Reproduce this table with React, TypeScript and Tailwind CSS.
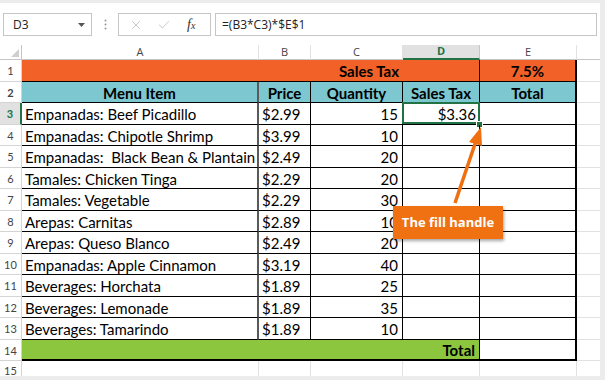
import { X, Check } from "lucide-react";

type Item = [string, string, string];

const items: Item[] = [
  ["Empanadas: Beef Picadillo", "$2.99", "15"],
  ["Empanadas: Chipotle Shrimp", "$3.99", "10"],
  ["Empanadas:  Black Bean & Plantain", "$2.49", "20"],
  ["Tamales: Chicken Tinga", "$2.29", "20"],
  ["Tamales: Vegetable", "$2.29", "30"],
  ["Arepas: Carnitas", "$2.89", "10"],
  ["Arepas: Queso Blanco", "$2.49", "20"],
  ["Empanadas: Apple Cinnamon", "$3.19", "40"],
  ["Beverages: Horchata", "$1.89", "25"],
  ["Beverages: Lemonade", "$1.89", "35"],
  ["Beverages: Tamarindo", "$1.89", "10"],
];

const rowH = (n: number) => (n % 2 === 1 ? "h-[22px]" : "h-[21px]");

function RowNum({ n, active }: { n: number; active?: boolean }) {
  return (
    <div
      className={
        active
          ? "w-[22px] shrink-0 flex items-center justify-center pt-[2px] bg-[#e1e1e1] border-r-2 border-r-[#217346] border-b border-b-[#d4d4d4] text-[11px] text-[#217346] font-bold"
          : "w-[22px] shrink-0 flex items-center justify-center pt-[2px] border-r border-b border-[#d4d4d4] text-[11px] text-[#444]"
      }
    >
      {n}
    </div>
  );
}

function Tail() {
  return <div className="flex-1 border-b border-[#e1e1e1]" />;
}

function ColHead({ label, w, active }: { label: string; w: string; active?: boolean }) {
  return (
    <div
      className={
        active
          ? `${w} shrink-0 flex items-center justify-center bg-[#e1e1e1] border-r border-[#c6c6c6] border-b-2 border-b-[#217346] text-[11px] text-[#217346] font-bold`
          : `${w} shrink-0 flex items-center justify-center border-r border-[#e1e1e1] border-b border-b-[#c6c6c6] text-[11px] text-[#444]`
      }
    >
      {label}
    </div>
  );
}

export default function App() {
  return (
    <div className="relative w-[605px] h-[380px] overflow-hidden bg-white border-t-[3px] border-r-[5px] border-b-[4px] border-[#ececec] flex flex-col font-[Lato,sans-serif] text-black">
      {/* Formula bar */}
      <div className="mt-[10px] h-[23px] flex items-stretch shrink-0 font-['Open_Sans',sans-serif]">
        <div className="ml-[3px] w-[89px] border border-[#c6c6c6] flex items-center justify-between pl-[9px] pr-[6px] text-[12px] text-[#222]">
          <span>D3</span>
          <svg width="7" height="4" viewBox="0 0 7 4">
            <polygon points="0,0 7,0 3.5,4" fill="#555" />
          </svg>
        </div>
        <div className="w-[26px] flex items-center justify-center">
          <svg width="3" height="11" viewBox="0 0 3 11">
            <circle cx="1.5" cy="1.5" r="1" fill="#999" />
            <circle cx="1.5" cy="5.5" r="1" fill="#999" />
            <circle cx="1.5" cy="9.5" r="1" fill="#999" />
          </svg>
        </div>
        <div className="w-[93px] border border-[#c6c6c6] flex items-center pl-[10px] gap-[14px]">
          <X size={14} strokeWidth={1.3} color="#b5b5b5" />
          <Check size={14} strokeWidth={1.3} color="#b5b5b5" />
          <span className="font-['Liberation_Serif',serif] italic text-[14px] text-[#333] leading-none ml-[2px]">
            f<span className="text-[10px]">x</span>
          </span>
        </div>
        <div className="ml-[4px] mr-[3px] flex-1 border border-[#c6c6c6] flex items-center pl-[6px] text-[12px] text-[#222]">
          =(B3*C3)*$E$1
        </div>
      </div>

      {/* Column headers */}
      <div className="mt-[9px] h-[15px] flex shrink-0 font-['Open_Sans',sans-serif]">
        <div className="w-[22px] shrink-0 border-r border-b border-[#c6c6c6] flex items-end justify-end pr-[2px] pb-[2px]">
          <svg width="8" height="8" viewBox="0 0 8 8">
            <polygon points="8,0 8,8 0,8" fill="#cfcfcf" />
          </svg>
        </div>
        <ColHead label="A" w="w-[237px]" />
        <ColHead label="B" w="w-[52px]" />
        <ColHead label="C" w="w-[92px]" />
        <ColHead label="D" w="w-[77px]" active />
        <ColHead label="E" w="w-[97px]" />
        <div className="flex-1 border-b border-[#c6c6c6]" />
      </div>

      {/* Row 1 */}
      <div className={`${rowH(1)} flex shrink-0 text-[15px]`}>
        <RowNum n={1} />
        <div className="w-[237px] shrink-0 bg-[#f26128] border-b border-black" />
        <div className="w-[221px] shrink-0 bg-[#f26128] border-r border-b border-black flex items-center justify-center pt-[2px] font-bold">
          Sales Tax
        </div>
        <div className="w-[97px] shrink-0 bg-[#f26128] border-r-2 border-b border-black flex items-center justify-center pt-[2px] font-bold">
          7.5%
        </div>
        <Tail />
      </div>

      {/* Row 2 */}
      <div className={`${rowH(2)} flex shrink-0 font-bold text-[15px]`}>
        <RowNum n={2} />
        <div className="w-[237px] shrink-0 bg-[#7dc7d1] border-r-2 border-r-[#5a5a5a] border-b border-b-black flex items-center justify-center pt-[2px]">Menu Item</div>
        <div className="w-[52px] shrink-0 bg-[#7dc7d1] border-r border-b border-black flex items-center justify-center pt-[2px]">Price</div>
        <div className="w-[92px] shrink-0 bg-[#7dc7d1] border-r border-b border-black flex items-center justify-center pt-[2px]">Quantity</div>
        <div className="w-[77px] shrink-0 bg-[#7dc7d1] border-r border-b border-black flex items-center justify-center pt-[2px]">Sales Tax</div>
        <div className="w-[97px] shrink-0 bg-[#7dc7d1] border-r-2 border-b border-black flex items-center justify-center pt-[2px]">Total</div>
        <Tail />
      </div>

      {/* Rows 3-13 */}
      {items.map(([name, price, qty], i) => {
        const n = i + 3;
        return (
          <div key={n} className={`${rowH(n)} flex shrink-0 text-[15px]`}>
            <RowNum n={n} active={n === 3} />
            <div className="w-[237px] shrink-0 border-r-2 border-r-[#5a5a5a] border-b border-b-black flex items-center pt-[2px] pl-[3px] whitespace-pre">
              {name}
            </div>
            <div className="w-[52px] shrink-0 border-r border-b border-black flex items-center pt-[2px] pl-[3px]">{price}</div>
            <div className="w-[92px] shrink-0 border-r border-b border-black flex items-center justify-end pt-[2px] pr-[4px]">{qty}</div>
            <div className="relative w-[77px] shrink-0 border-r border-b border-black flex items-center justify-end pt-[2px] pr-[3px]">
              {n === 3 && (
                <>
                  $3.36
                  <div className="absolute -left-[1px] -top-[1px] -right-[1px] bottom-0 border-2 border-[#217346]" />
                  <div className="absolute -right-[4px] -bottom-[4px] w-[7px] h-[7px] bg-[#217346] border border-white" />
                </>
              )}
            </div>
            <div className="w-[97px] shrink-0 border-r-2 border-b border-black" />
            <Tail />
          </div>
        );
      })}

      {/* Row 14 */}
      <div className={`${rowH(14)} flex shrink-0 text-[15px]`}>
        <RowNum n={14} />
        <div className="w-[458px] shrink-0 bg-[#8cc63f] border-r border-b-2 border-black flex items-center justify-end pt-[2px] pr-[4px] font-bold">
          Total
        </div>
        <div className="w-[97px] shrink-0 border-r-2 border-b-2 border-black" />
        <Tail />
      </div>

      {/* Row 15 */}
      <div className="flex-1 flex">
        <RowNum n={15} />
        <div className="w-[237px] shrink-0 border-r border-[#e1e1e1]" />
        <div className="w-[52px] shrink-0 border-r border-[#e1e1e1]" />
        <div className="w-[92px] shrink-0 border-r border-[#e1e1e1]" />
        <div className="w-[77px] shrink-0 border-r border-[#e1e1e1]" />
        <div className="w-[97px] shrink-0 border-r border-[#e1e1e1]" />
        <div className="flex-1" />
      </div>

      {/* Callout arrow (page coordinates; the frame's 3px top border is undone) */}
      <svg className="absolute left-0 -top-[3px] pointer-events-none" width="605" height="380" viewBox="0 0 605 380">
        <line x1="455" y1="203" x2="476" y2="141" stroke="#ef7010" strokeWidth="3.5" />
        <polygon points="481,127 482,146 469,142" fill="#ef7010" />
      </svg>

      {/* Callout box */}
      <div className="absolute left-[393px] top-[203px] w-[110px] h-[33px] bg-[#f07112] shadow-[1px_2px_3px_rgba(0,0,0,0.35)] flex items-center justify-center text-white font-bold text-[13px] font-['Open_Sans',sans-serif]">
        The fill handle
      </div>
    </div>
  );
}
